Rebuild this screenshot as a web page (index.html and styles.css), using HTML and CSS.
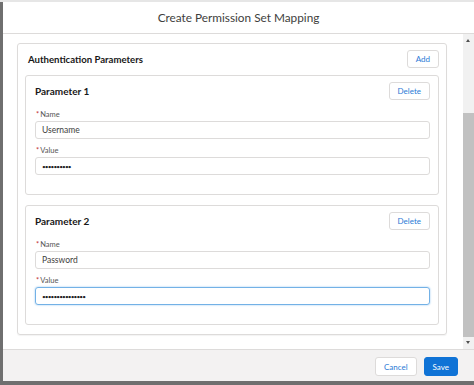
FILE: index.html
```html
<!DOCTYPE html>
<html lang="en">
<head>
<meta charset="UTF-8">
<title>Create Permission Set Mapping</title>
<link rel="stylesheet" href="styles.css">
</head>
<body>
<div class="backdrop">
  <div class="modal">
    <div class="modal-header">Create Permission Set Mapping</div>

    <div class="modal-content">
      <div class="content-main">
        <div class="card">
          <div class="card-header">
            <div class="card-title">Authentication Parameters</div>
            <div class="btn">Add</div>
          </div>

          <!-- Parameter 1 -->
          <div class="param-card">
            <div class="card-header">
              <div class="param-title">Parameter 1</div>
              <div class="btn">Delete</div>
            </div>
            <div class="field">
              <div class="label"><span class="req">*</span>Name</div>
              <div class="input">Username</div>
            </div>
            <div class="field">
              <div class="label"><span class="req">*</span>Value</div>
              <div class="input dots">&bull;&bull;&bull;&bull;&bull;&bull;&bull;&bull;&bull;&bull;</div>
            </div>
          </div>

          <!-- Parameter 2 -->
          <div class="param-card">
            <div class="card-header">
              <div class="param-title">Parameter 2</div>
              <div class="btn">Delete</div>
            </div>
            <div class="field">
              <div class="label"><span class="req">*</span>Name</div>
              <div class="input">Password</div>
            </div>
            <div class="field">
              <div class="label"><span class="req">*</span>Value</div>
              <div class="input dots focus">&bull;&bull;&bull;&bull;&bull;&bull;&bull;&bull;&bull;&bull;&bull;&bull;&bull;&bull;&bull;</div>
            </div>
          </div>
        </div>
      </div>

      <div class="scrollbar">
        <div class="sb-arrow up"></div>
        <div class="sb-track">
          <div class="sb-thumb"></div>
        </div>
        <div class="sb-arrow down"></div>
      </div>
    </div>

    <div class="modal-footer">
      <div class="btn btn-lg">Cancel</div>
      <div class="btn btn-lg btn-brand">Save</div>
    </div>
  </div>
</div>
</body>
</html>
```

FILE: styles.css
```css
html, body { margin: 0; height: 100%; }
body { font-family: Lato, "Open Sans", Arial, sans-serif; color: #3e3e3c; background: #6f6f6f; }
.backdrop { padding: 2px 0 4px 3px; height: 379px; background: linear-gradient(#e6e6e6 0, #e6e6e6 2px, #6f6f6f 2px); }
.modal { background: #fff; height: 379px; display: flex; flex-direction: column; }

.modal-header {
    height: 31px;
    border-bottom: 1px solid #dddbda;
    display: flex;
    align-items: center;
    justify-content: center;
    font-size: 11.8px;
    color: #3e3e3c;
}

.modal-content { height: 315px; display: flex; }
.content-main { width: 460px; padding: 9px 16px 0 14px; box-sizing: border-box; }

.card {
    border: 1px solid #dddbda;
    border-radius: 3px;
    padding: 6px 7px 9px 7px;
    box-shadow: 0 1px 1px rgba(0,0,0,0.05);
}
.card-header { display: flex; justify-content: space-between; align-items: center; height: 18px; margin-bottom: 7px; }
.card-title { font-weight: bold; font-size: 9.6px; padding-left: 3px; color: #181818; }

.param-card {
    border: 1px solid #dddbda;
    border-radius: 3px;
    padding: 6px 8px 19px 9px;
    margin-bottom: 10px;
}
.param-card:last-child { margin-bottom: 0; }
.param-card .card-header { margin-bottom: 10px; }
.param-title { font-weight: bold; font-size: 10px; color: #181818; }

.btn {
    border: 1px solid #dddbda;
    border-radius: 3px;
    background: #fff;
    color: #2a7ad6;
    font-size: 8px;
    height: 18px;
    box-sizing: border-box;
    display: flex;
    align-items: center;
    justify-content: center;
    padding: 0 8px;
}

.field { margin-bottom: 7px; }
.field:last-child { margin-bottom: 0; }
.label { font-size: 7.5px; line-height: 10px; height: 10px; margin-bottom: 1px; padding-left: 1px; color: #555; }
.req { color: #c23934; margin-right: 1px; }
.input {
    height: 18px;
    box-sizing: border-box;
    border: 1px solid #dddbda;
    border-radius: 3px;
    font-size: 8.5px;
    padding-left: 6px;
    display: flex;
    align-items: center;
    color: #3e3e3c;
}
.input.dots { font-size: 6.5px; letter-spacing: -0.9px; color: #222; }
.input.focus { border-color: #73b1e6; box-shadow: 0 0 2px #8cc0ee; }

.scrollbar { width: 11px; background: #f1f1f1; display: flex; flex-direction: column; }
.sb-arrow { height: 12px; position: relative; }
.sb-arrow::after {
    content: "";
    position: absolute;
    left: 3px;
    border-left: 2.5px solid transparent;
    border-right: 2.5px solid transparent;
}
.sb-arrow.up::after { top: 5px; border-bottom: 3px solid #505050; }
.sb-arrow.down::after { top: 4px; border-top: 3px solid #505050; }
.sb-track { flex: 1; padding-top: 67px; }
.sb-thumb { height: 224px; background: #c1c1c1; }

.modal-footer {
    flex: 1;
    background: #f3f2f2;
    border-top: 1px solid #dddbda;
    display: flex;
    justify-content: flex-end;
    align-items: center;
    gap: 7px;
    padding: 2px 16px 0 0;
}
.btn-lg { height: 19px; font-size: 8px; padding: 0 8px; }
.btn-brand { background: #0f73d6; border-color: #0f73d6; color: #fff; }
```
